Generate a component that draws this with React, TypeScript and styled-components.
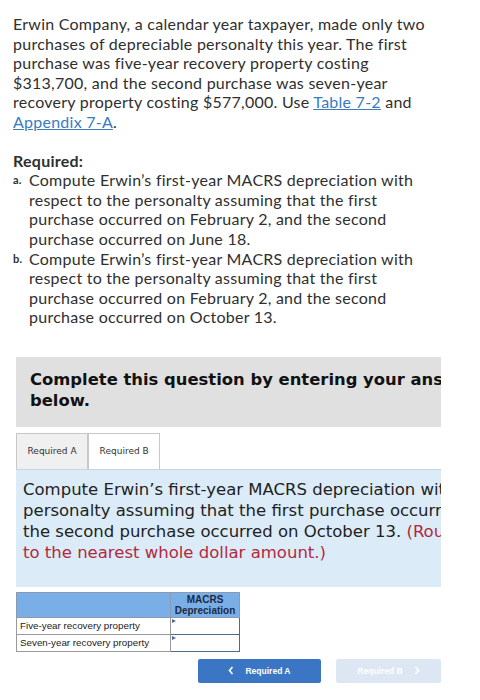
import React from 'react';
import styled, { createGlobalStyle } from 'styled-components';

const GlobalStyle = createGlobalStyle`
  body {
    margin: 0;
    background: #fff;
  }
`;

const Page = styled.div`
  width: 480px;
  height: 700px;
  overflow: hidden;
  padding: 14px 0 0 13px;
  box-sizing: border-box;
`;

const Intro = styled.p`
  margin: 0;
  width: 425px;
  font-family: 'Lato', sans-serif;
  font-size: 16px;
  letter-spacing: 0.25px;
  line-height: 19.6px;
  color: #2f2f2f;
`;

const TextLink = styled.a`
  color: #3a7bbf;
  text-decoration: underline;
`;

const RequiredTitle = styled.div`
  margin-top: 19px;
  font-family: 'Lato', sans-serif;
  font-weight: 700;
  font-size: 16px;
  letter-spacing: 0.25px;
  line-height: 19.6px;
  color: #2f2f2f;
`;

const Parts = styled.ol`
  margin: 0;
  padding: 0;
  list-style: none;
  width: 402px;
`;

const Part = styled.li`
  display: flex;
  font-family: 'Lato', sans-serif;
  font-size: 16px;
  letter-spacing: 0.25px;
  line-height: 19.6px;
  color: #2f2f2f;
`;

const PartMark = styled.span`
  flex: 0 0 16px;
  font-size: 11px;
  font-weight: 700;
`;

const Question = styled.div`
  margin: 30px 0 0 3px;
  width: 425px;
`;

const Banner = styled.div`
  height: 70px;
  box-sizing: border-box;
  padding: 12px 0 0 14px;
  background: #e0e0e0;
  overflow: hidden;
`;

const BannerText = styled.div`
  width: 610px;
  font-family: 'DejaVu Sans', Verdana, sans-serif;
  font-weight: 700;
  font-size: 16.4px;
  line-height: 21px;
  color: #111;
`;

const Tabs = styled.div`
  display: flex;
  margin-top: 6px;
  border-bottom: 1px solid #c9d3dd;
`;

const Tab = styled.div<{ $active?: boolean }>`
  height: 35px;
  display: flex;
  align-items: center;
  padding: 0 10.5px;
  border: 1px solid #c8c8c8;
  border-bottom: none;
  background: ${(p) => (p.$active ? '#fff' : '#f0f0f0')};
  font-family: 'DejaVu Sans', Verdana, sans-serif;
  font-size: 9px;
  color: #333;
`;

const Prompt = styled.div`
  height: 117px;
  box-sizing: border-box;
  padding: 9px 0 0 7px;
  background: #dcebf8;
  overflow: hidden;
  font-family: 'DejaVu Sans', Verdana, sans-serif;
  font-size: 16.5px;
  line-height: 21px;
  color: #222;
  white-space: nowrap;
`;

const Hint = styled.span`
  color: #b3283c;
`;

const Grid = styled.table`
  margin-top: 5px;
  border-collapse: collapse;
  font-family: 'Liberation Sans', Arial, sans-serif;
  font-size: 9.8px;
  color: #222;
`;

const HeadCell = styled.th`
  height: 24px;
  padding: 0;
  background: #7aaee6;
  border: 1px solid #8a9ab0;
  font-weight: 700;
  font-size: 10px;
  line-height: 11px;
  color: #1b2a44;
  text-align: center;
`;

const LabelCell = styled.td`
  width: 150px;
  height: 16px;
  padding: 0 0 0 3px;
  border: 1px solid #9a9a9a;
  white-space: nowrap;
`;

const InputCell = styled.td`
  position: relative;
  width: 68px;
  padding: 0;
  border: 1px solid #4d6a92;
  background: #fff;

  &::before {
    content: '';
    position: absolute;
    top: 1px;
    left: 1px;
    border-left: 4px solid #4d6a92;
    border-top: 2px solid transparent;
    border-bottom: 2px solid transparent;
  }
`;

const Nav = styled.div`
  display: flex;
  justify-content: flex-end;
  gap: 15px;
  margin-top: 7px;
`;

const NavButton = styled.button<{ $disabled?: boolean }>`
  height: 24px;
  width: ${(p) => (p.$disabled ? '105px' : '123px')};
  display: flex;
  align-items: center;
  justify-content: center;
  gap: 11px;
  border: none;
  border-radius: 2px;
  background: ${(p) => (p.$disabled ? '#dde7f3' : '#3a76c4')};
  color: #fff;
  font-family: 'Liberation Sans', Arial, sans-serif;
  font-weight: 700;
  font-size: 8.5px;
  padding: 0;
`;

const Chevron = ({ dir }: { dir: 'left' | 'right' }) => (
  <svg width="6" height="9" viewBox="0 0 6 9" fill="none">
    <path
      d={dir === 'left' ? 'M4.5 1 L1.5 4.5 L4.5 8' : 'M1.5 1 L4.5 4.5 L1.5 8'}
      stroke="#fff"
      strokeWidth="1.6"
    />
  </svg>
);

export default function App() {
  return (
    <>
      <GlobalStyle />
      <Page>
        <Intro>
          Erwin Company, a calendar year taxpayer, made only two purchases of depreciable
          personalty this year. The first purchase was five-year recovery property costing
          $313,700, and the second purchase was seven-year recovery property costing
          $577,000. Use <TextLink>Table 7-2</TextLink> and <TextLink>Appendix 7-A</TextLink>.
        </Intro>

        <RequiredTitle>Required:</RequiredTitle>
        <Parts>
          <Part>
            <PartMark>a.</PartMark>
            <span>
              Compute Erwin’s first-year MACRS depreciation with respect to the personalty
              assuming that the first purchase occurred on February 2, and the second
              purchase occurred on June 18.
            </span>
          </Part>
          <Part>
            <PartMark>b.</PartMark>
            <span>
              Compute Erwin’s first-year MACRS depreciation with respect to the personalty
              assuming that the first purchase occurred on February 2, and the second
              purchase occurred on October 13.
            </span>
          </Part>
        </Parts>

        <Question>
          <Banner>
            <BannerText>Complete this question by entering your answers in the tabs below.</BannerText>
          </Banner>

          <Tabs>
            <Tab>Required A</Tab>
            <Tab $active>Required B</Tab>
          </Tabs>

          <Prompt>
            Compute Erwin’s first-year MACRS depreciation with respect to the
            <br />
            personalty assuming that the first purchase occurred on February 2, and
            <br />
            the second purchase occurred on October 13. <Hint>(Round your answer</Hint>
            <br />
            <Hint>to the nearest whole dollar amount.)</Hint>
          </Prompt>

          <Grid>
            <thead>
              <tr>
                <HeadCell />
                <HeadCell>
                  MACRS
                  <br />
                  Depreciation
                </HeadCell>
              </tr>
            </thead>
            <tbody>
              <tr>
                <LabelCell>Five-year recovery property</LabelCell>
                <InputCell />
              </tr>
              <tr>
                <LabelCell>Seven-year recovery property</LabelCell>
                <InputCell />
              </tr>
            </tbody>
          </Grid>

          <Nav>
            <NavButton>
              <Chevron dir="left" />
              Required A
            </NavButton>
            <NavButton $disabled>
              Required B
              <Chevron dir="right" />
            </NavButton>
          </Nav>
        </Question>
      </Page>
    </>
  );
}
